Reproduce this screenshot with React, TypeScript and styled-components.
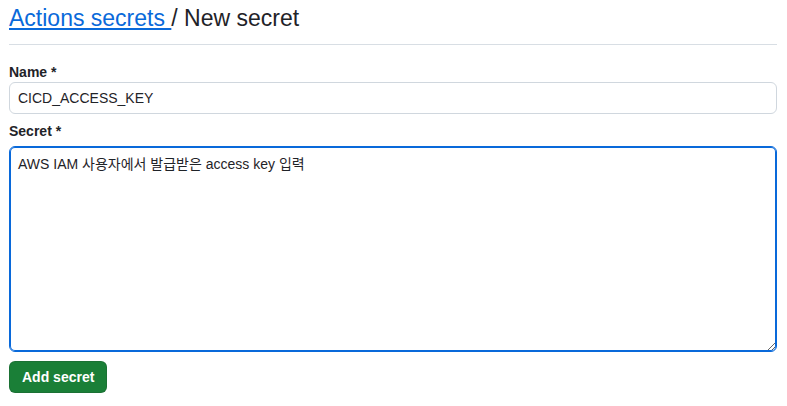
import styled, { createGlobalStyle } from 'styled-components';

const GlobalStyle = createGlobalStyle`
    html, body {
        margin: 0;
        padding: 0;
        background: #ffffff;
    }
    body {
        font-family: "Liberation Sans", Arial, "Noto Sans CJK KR", sans-serif;
        color: #1f2328;
    }
`;

const Page = styled.div`
    padding: 0 10px 0 9px;
`;

const Subhead = styled.div`
    display: flex;
    align-items: center;
    padding-bottom: 8px;
    border-bottom: 1px solid #d8dee4;
    margin-bottom: 17px;
`;

const Heading = styled.h2`
    margin: 0;
    font-size: 23px;
    font-weight: 400;
    line-height: 36px;
    color: #1f2328;

    a {
        color: #0969da;
        text-decoration: underline;
        text-underline-offset: 2px;
    }
`;

const Form = styled.form`
    display: flex;
    flex-direction: column;
`;

const Group = styled.div<{ gap: number }>`
    display: flex;
    flex-direction: column;
    margin-bottom: ${p => p.gap}px;
`;

const Label = styled.label<{ space: number }>`
    font-size: 14px;
    font-weight: 700;
    line-height: 20px;
    margin-bottom: ${p => p.space}px;
`;

const TextInput = styled.input`
    box-sizing: border-box;
    height: 32px;
    padding: 5px 8px;
    font-family: "Liberation Sans", Arial, "Noto Sans CJK KR", sans-serif;
    font-size: 14px;
    line-height: 20px;
    color: #1f2328;
    border: 1px solid #d0d7de;
    border-radius: 6px;
    background: #ffffff;
    outline: none;
`;

const TextArea = styled.textarea`
    box-sizing: border-box;
    height: 206px;
    padding: 7px 8px;
    font-family: "Liberation Sans", Arial, "Noto Sans CJK KR", sans-serif;
    font-size: 14px;
    line-height: 20px;
    color: #1f2328;
    border: 1px solid #0969da;
    box-shadow: inset 0 0 0 1px #0969da;
    border-radius: 6px;
    outline: none;
    resize: vertical;
`;

const Actions = styled.div`
    display: flex;
`;

const PrimaryButton = styled.button`
    height: 32px;
    padding: 0 12px;
    font-family: "Liberation Sans", Arial, sans-serif;
    font-size: 14px;
    font-weight: 700;
    color: #ffffff;
    background: #1a7f37;
    border: 1px solid rgba(31, 35, 40, 0.15);
    border-radius: 6px;
    cursor: pointer;
`;

export default function App() {
    return (
        <>
            <GlobalStyle />
            <Page>
                <Subhead>
                    <Heading>
                        <a href="#">Actions secrets </a>/ New secret
                    </Heading>
                </Subhead>
                <Form onSubmit={e => e.preventDefault()}>
                    <Group gap={7}>
                        <Label space={0} htmlFor="secret_name">Name *</Label>
                        <TextInput id="secret_name" defaultValue="CICD_ACCESS_KEY" />
                    </Group>
                    <Group gap={9}>
                        <Label space={5} htmlFor="secret_value">Secret *</Label>
                        <TextArea id="secret_value" defaultValue="AWS IAM 사용자에서 발급받은 access key 입력" />
                    </Group>
                    <Actions>
                        <PrimaryButton type="submit">Add secret</PrimaryButton>
                    </Actions>
                </Form>
            </Page>
        </>
    );
}
